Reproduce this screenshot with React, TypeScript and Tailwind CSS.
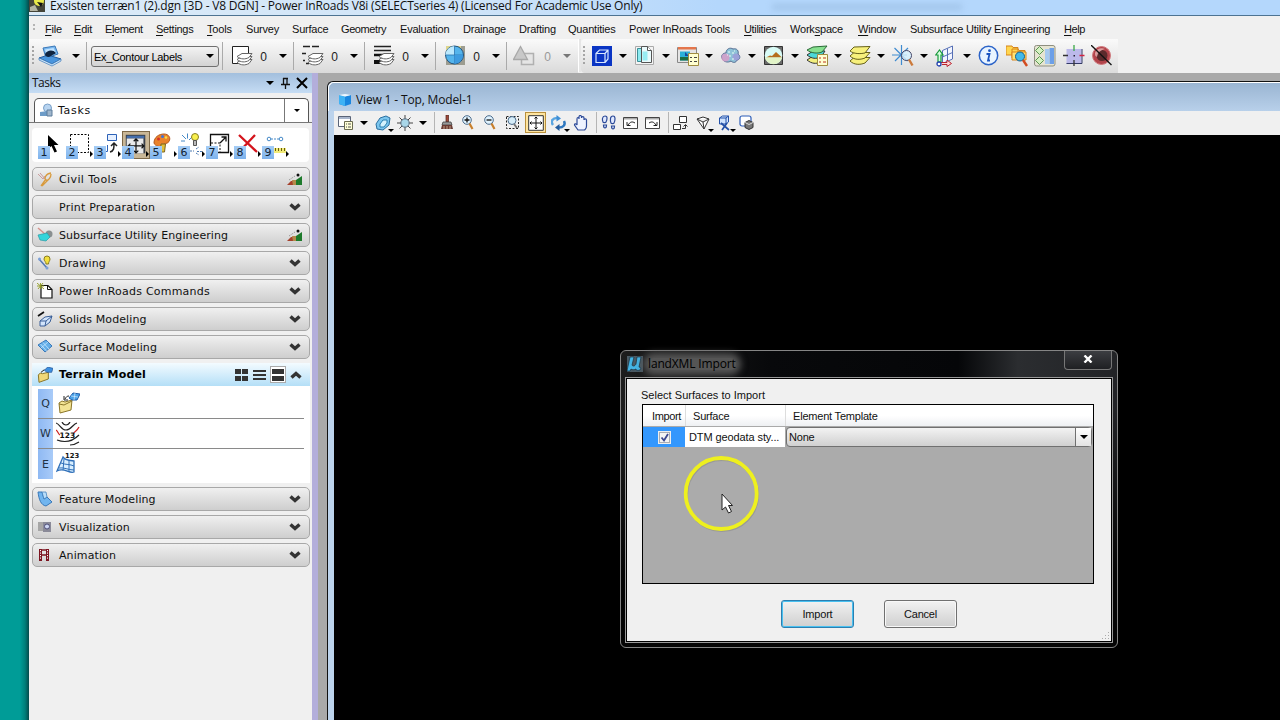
import type { ReactNode } from "react";
import { clsx } from "clsx";

const ui = "font-['Liberation_Sans',Arial,sans-serif]";
const segoe = "font-['Open_Sans','Noto_Sans',sans-serif]";
const verdana = "font-['DejaVu_Sans',Verdana,sans-serif]";

type IconProps = { children: ReactNode; className?: string; box?: number };

const Icon = ({ children, className = "w-[22px] h-[22px]", box = 22 }: IconProps) => (
  <svg viewBox={`0 0 ${box} ${box}`} fill="none" className={clsx("shrink-0", className)}>
    {children}
  </svg>
);

const Arrow = ({ className = "text-black" }: { className?: string }) => (
  <svg viewBox="0 0 8 4" className={clsx("w-2 h-1 shrink-0", className)}>
    <path d="M0 0h8L4 4z" fill="currentColor" />
  </svg>
);

const CornerArrow = () => (
  <svg viewBox="0 0 6 3" className="absolute w-1.5 h-[3px] -right-[3px] -bottom-px">
    <path d="M0 0h6L3 3z" fill="#000" />
  </svg>
);

const Grip = () => (
  <div className="w-0.5 h-5 shrink-0 bg-[repeating-linear-gradient(to_bottom,#a5a5a5_0_2px,transparent_2px_4px)]" />
);

/* ---------- menu bar ---------- */

const menus = [
  { label: "File", key: 0, cls: "w-[29px]" },
  { label: "Edit", key: 0, cls: "w-[31px]" },
  { label: "Element", key: 1, cls: "w-[51px] tracking-[-0.4px]" },
  { label: "Settings", key: 0, cls: "w-[51px] tracking-[-0.3px]" },
  { label: "Tools", key: 0, cls: "w-[39px]" },
  { label: "Survey", key: -1, cls: "w-[46px]" },
  { label: "Surface", key: -1, cls: "w-[49px]" },
  { label: "Geometry", key: -1, cls: "w-[59px] tracking-[-0.4px]" },
  { label: "Evaluation", key: -1, cls: "w-[63px]" },
  { label: "Drainage", key: -1, cls: "w-[56px]" },
  { label: "Drafting", key: -1, cls: "w-[49px]" },
  { label: "Quantities", key: -1, cls: "w-[61px]" },
  { label: "Power InRoads Tools", key: -1, cls: "w-[115px] tracking-[-0.14px]" },
  { label: "Utilities", key: 0, cls: "w-[46px] tracking-[-0.35px]" },
  { label: "Workspace", key: 4, cls: "w-[68px]" },
  { label: "Window", key: 0, cls: "w-[52px]" },
  { label: "Subsurface Utility Engineering", key: -1, cls: "w-[154px] tracking-[-0.24px]" },
  { label: "Help", key: 0, cls: "w-[30px] tracking-[-0.4px]" },
];

const MenuBar = () => (
  <div className={clsx(ui, "flex items-center h-[23px] pl-1 bg-[#f0f0f0] text-[11px] tracking-[-0.2px] text-[#111]")}>
    <div className="w-3 shrink-0">
      <div className="w-0.5 h-2 bg-[repeating-linear-gradient(to_bottom,#b5b5b5_0_2px,transparent_2px_4px)]" />
    </div>
    {menus.map(({ label, key, cls }) => (
      <div key={label} className={clsx("shrink-0 whitespace-nowrap pt-1", cls)}>
        {key < 0 ? label : (
          <>
            {label.slice(0, key)}
            <span className="underline underline-offset-2">{label[key]}</span>
            {label.slice(key + 1)}
          </>
        )}
      </div>
    ))}
  </div>
);

/* ---------- main toolbar ---------- */

const Stack = () => (
  <g fill="#fff" stroke="#666">
    <path d="M6 17.500l5-3h10l-3 4c-4 2-8 2-12-1z" />
    <path d="M6 14.500l5-3h10l-3 4c-4 2-8 2-12-1z" />
    <path d="M6 11.500l5-3h10l-3 4c-4 2-8 2-12-1z" />
  </g>
);

const attributes = [
  {
    name: "level",
    icon: <><path d="M1.500 1.500h16v17h-16z" fill="#fff" stroke="#222" /><Stack /></>,
  },
  {
    name: "style",
    icon: <><path d="M1 1.500h7M10 1.500h7M0 8.500h4M1 15.500h2M4 18.500h3" stroke="#222" strokeWidth="1.300" /><Stack /></>,
  },
  {
    name: "weight",
    icon: <><path d="M1 1.500h17M1 5.500h17" stroke="#222" strokeWidth="1.300" /><path d="M1 10h10" stroke="#111" strokeWidth="2.500" /><path d="M1 17h8" stroke="#111" strokeWidth="4" /><Stack /></>,
  },
  {
    name: "color",
    icon: (
      <>
        <path d="M2 1h19v19H2z" fill="#9c9c90" />
        <path d="M2 1h15v14H2z" fill="#ddd58e" />
        <circle cx="10.500" cy="10" r="9" fill="#54b4ec" stroke="#24527c" />
        <path d="M10.500 1a9 9 0 0 0-9 9h9z" fill="#bce8fc" />
        <path d="M2 10h17M10.500 1v18" stroke="#2a74b0" strokeWidth=".8" />
        <path d="M10.500 10h8.500a9 9 0 0 1-8.500 9z" fill="#3d9be0" />
      </>
    ),
  },
];

const viewTools = [
  {
    name: "models",
    icon: <><path d="M1 1h20v20H1z" fill="#0a35c4" /><path d="M5 8.500h9v9H5zM5 8.500l3.500-3.500H17v9l-3 3.500M14 8.500l3-3.500" stroke="#d9e8ff" strokeWidth="1.200" /></>,
  },
  {
    name: "references",
    icon: <><path d="M1.500 1.500h18v18h-18z" fill="#f4f4f4" stroke="#aaa" /><path d="M3.500 3.500h7v13h-7z" fill="#8ceaf0" stroke="#3b8f97" /><path d="M7.500 1.500h6l4 4v12h-10z" fill="#eafafc" stroke="#555" /><path d="M8.500 6.500h5v9h-5z" fill="#98edf3" /><path d="M13.500 1.500v4h4" fill="#fff" stroke="#555" /></>,
  },
  {
    name: "raster",
    icon: <><path d="M.5 2.500h19v15H.5z" fill="#e4e4e4" stroke="#888" /><path d="M1 2h18v2.500H1z" fill="#e4764c" /><path d="M3 6.500h10v9H3z" fill="#2ab0d8" /><path d="M3 12h10v3.500H3z" fill="#1c6d43" /><path d="M8 7l4 4H8z" fill="#1647a0" /><path d="M11.500 8.500h10v12h-10z" fill="#ffffd0" stroke="#a08c40" /><path d="M13 12.500h2M17 12.500h3M13 16.500h2M17 16.500h3" stroke="#444" strokeWidth="1.200" /></>,
  },
  {
    name: "cloud",
    icon: <><path d="M2 13c-1-3 1-5 4-5 0-4 4-6 7-4 4-1 6 2 5 5 3 2 2 6-1 6-1 3-4 3-6 1-3 2-8 1-9-3z" fill="#8fc3d8" stroke="#526a90" /><circle cx="5.500" cy="12.500" r="4" fill="#dc9bc8" opacity=".8" /><circle cx="16" cy="12" r="3.500" fill="#9f94d8" opacity=".7" /><path d="M8 7h2M12 8h2M9 11h2M14 6h1M12 14h2M7 10h1" stroke="#e8fff5" /></>,
  },
  {
    name: "terrain",
    icon: <><path d="M1.500 1.500h18v18h-18z" fill="#6a6a6a" stroke="#333" /><circle cx="10.500" cy="10.500" r="8.800" fill="#d8fbf6" /><path d="M3 12.500l4-2 2 .500 4-4 6 5.500z" fill="#b56e1e" /><path d="M2 12.500h17c-1 4-4 6.500-8.500 6.500S3 16.500 2 12.500z" fill="#e2f4c8" /></>,
  },
  {
    name: "levels",
    icon: <><path d="M1 15l6-4h12l-4 6c-5 2-9 2-14-2z" fill="#f2ef7d" stroke="#333" /><path d="M1 10l6-4h12l-4 6c-5 2-9 2-14-2z" fill="#4bd8d8" stroke="#333" /><path d="M1 5l6-3 14-1-5 6C11 9 5 8 1 5z" fill="#86e08f" stroke="#2b6a37" /><path d="M11.500 9.500h10v11h-10z" fill="#ffffd0" stroke="#a08c40" /><path d="M13 13h2M17 13h3M13 17h2M17 17h3" stroke="#b32" strokeWidth="1.200" /></>,
  },
  {
    name: "level-display",
    icon: <g fill="#f7f07c" stroke="#66601a"><path d="M1 16l4-3.500h16l-5 5.500c-5 2-11 2-15-2z" /><path d="M1 11l4-3.500h16l-5 5.500c-5 2-11 2-15-2z" /><path d="M1 6l4-4 16-.500-5 6.500C11 9 5 9 1 6z" /></g>,
  },
  {
    name: "snap",
    icon: <><path d="M9.500 0v20M0 10h15M2.500 3l13 13M16 3L3 16" stroke="#3f8bd0" strokeWidth="1.200" /><circle cx="14.500" cy="10.500" r="5" fill="#d3f0ff" fillOpacity=".8" stroke="#446" /><path d="M17 14.500l3.500 6" stroke="#cc7a3b" strokeWidth="2.400" /></>,
  },
  {
    name: "accudraw",
    icon: <><path d="M7.500 5.500l10-4.500v13l-10 4.500zM7.500 12l10-4.500M12.500 3.500v13" fill="#f3f5ff" stroke="#556fb5" /><path d="M3 17v-7H.7L4.500 5 8 10H6v7z" fill="#d9ffe0" stroke="#16993a" strokeWidth="1.200" /><path d="M6 17.500h6v-2.500l4.500 3.500-4.500 3v-2H7" fill="#ffd5d5" stroke="#b8222c" /><circle cx="4" cy="19" r="2" fill="#fff" stroke="#2340b0" strokeWidth="1.300" /></>,
  },
];

const endTools = [
  {
    name: "info",
    icon: (
      <>
        <circle cx="10.500" cy="10.500" r="9.200" fill="#e9f4ff" stroke="#2b63c8" strokeWidth="1.500" />
        <circle cx="11.500" cy="5.700" r="1.400" fill="#1b54c0" />
        <path d="M8.500 9h3L10 15.500h2" stroke="#1b54c0" strokeWidth="1.800" />
      </>
    ),
  },
  {
    name: "explore",
    icon: <><path d="M0 1h6l1 1.500h5V10H0zM6 4h6l1 1.500h6V13H6z" fill="#ffd64f" stroke="#d5831c" /><path d="M6 7h14v8H6z" fill="#ffe273" stroke="#d5831c" /><circle cx="14" cy="11.500" r="4.500" fill="#42b9e8" stroke="#15608c" /><path d="M17 15l4 6" stroke="#d24b1f" strokeWidth="2.400" /></>,
  },
  {
    name: "toggle",
    icon: <><rect x=".5" y=".5" width="20.500" height="20.500" rx="2" fill="#e6e4d2" stroke="#8f8f80" /><path d="M11 4h4v15h-4z" fill="#a6c9f0" /><path d="M15.500 3h4.500v16h-4.500z" fill="#6c9fe8" /><path d="M5.500 1.500l4 4-4 4-4-4zM5.500 11.500l4 4-4 4-4-4z" fill="#d5f2c2" stroke="#5b9450" /></>,
  },
  {
    name: "center",
    icon: <><path d="M3.500 4h15v15h-15z" fill="#bcb9ea" /><path d="M3.500 18.500h15.500V4" stroke="#333a66" /><path d="M11 0v6" stroke="#39a845" strokeWidth="1.300" /><path d="M16.500 10.500h5" stroke="#d22440" strokeWidth="1.500" /><path d="M0 10.500h5M11 15v6" stroke="#333" strokeWidth="1.300" /><path d="M10.500 10H12v1.500h-1.500z" fill="#223" /></>,
  },
  {
    name: "stop",
    icon: <><circle cx="10.500" cy="10.500" r="9" fill="#b2444b" stroke="#d0787c" /><circle cx="11" cy="10.500" r="5.500" fill="#5b2a2c" /><path d="M4 8c1-4 6-6 10-4-4 1-7 3-8 8-2-1-2-2-2-4z" fill="#ecbcbc" opacity=".75" /><path d="M0 0l20.500 20" stroke="#111" strokeWidth="1.300" /></>,
  },
];

const MainToolbar = () => (
  <div className="flex h-[34px] bg-[#f0f0f0]">
    <div className={clsx(ui, "flex items-center shrink-0 w-[549px] pl-[3px] bg-gradient-to-b from-[#fafafa] to-[#dadada] text-[12px]")}>
      <Grip />
      <Icon className="w-6 h-6 ml-1" box={24}>
        <path d="M5 4l12-2 3 8-12 4z" fill="#79b7ef" stroke="#3a78b8" />
        <path d="M7 5.500l8.500-1.500 2.500 5-9 3z" fill="#bfe2ff" />
        <path d="M1 14l9-3 13 4-9 5z" fill="#4a95dd" stroke="#235c9e" />
        <path d="M7 10c2-4 8-5 11-1-2 2-3 1-5 3s-6 1-6-2z" fill="#0f2440" />
        <path d="M1 14v2l13 6 9-5v-2l-9 5z" fill="#cfe6fb" stroke="#3a78b8" strokeWidth=".7" />
      </Icon>
      <div className="ml-2.5"><Arrow /></div>
      <div className="w-px h-7 ml-1.5 shrink-0 bg-[#aaa]" />
      <div className="flex items-center justify-between w-[128px] h-[21px] ml-1 shrink-0 pl-0.5 pr-1 rounded-[3px] border border-[#707070] bg-gradient-to-b from-[#f3f3f3] to-[#d3d3d3]">
        <span className="pt-0.5 text-[11px] tracking-[-0.33px] text-black">Ex_Contour Labels</span>
        <Arrow />
      </div>
      <div className="w-[3px] shrink-0" />
      {attributes.map(({ name, icon }) => (
        <div key={name} className="flex items-center w-[71px] shrink-0">
          <div className="w-px h-7 bg-[#aaa]" />
          <Icon className="w-[22px] h-[22px] ml-2">{icon}</Icon>
          <span className="w-[21px] pt-0.5 text-center text-[#222]">0</span>
          <div className="ml-[5px]"><Arrow /></div>
        </div>
      ))}
      <div className="w-px h-7 shrink-0 bg-[#aaa]" />
      <Icon className="w-[22px] h-[22px] ml-1.5">
        <path d="M8.500 8.500h12v11h-12z" fill="#e5e5e5" stroke="#b0b0b0" strokeWidth="1.500" />
        <path d="M7.500 1.500l7 13h-14z" fill="#c8c8c8" stroke="#a8a8a8" strokeWidth="1.300" />
      </Icon>
      <span className="w-[25px] pt-0.5 text-center shrink-0 text-[#999]">0</span>
      <div className="ml-[3px]"><Arrow className="text-[#777]" /></div>
    </div>
    <div className="w-[3px] h-[33px] shrink-0 border-l border-white bg-[#e6e6e6]" />
    <div className="flex items-center shrink-0 w-[537px] pl-0.5 rounded-l bg-gradient-to-b from-[#fafafa] to-[#dcdcdc]">
      <Grip />
      <div className="w-[6px] shrink-0" />
      {viewTools.map(({ name, icon }) => (
        <div key={name} className="flex items-center w-[43px] shrink-0">
          <Icon>{icon}</Icon>
          <div className="ml-1.5"><Arrow /></div>
        </div>
      ))}
      {endTools.map(({ name, icon }) => (
        <div key={name} className="w-[28.2px] shrink-0">
          <Icon>{icon}</Icon>
        </div>
      ))}
    </div>
  </div>
);

/* ---------- tasks panel ---------- */

const quickTools = [
  { n: 1, icon: <path d="M10 4v14l3.500-3 3 6.500 2.500-1-3-6.500h4.500z" fill="#000" /> },
  { n: 2, icon: <path d="M4.500 3.500h18v18h-18z" stroke="#000" strokeDasharray="2 1.500" /> },
  { n: 3, icon: <><path d="M13.500 3.500h9v6h-9z" fill="#e6f0ff" stroke="#2d62b8" /><path d="M8 20.500h5.500V14" stroke="#2d62b8" /><path d="M16 21c4-1 4-4 4-8M17 15l3-3 3 3" stroke="#222" strokeWidth="1.500" /></> },
  {
    n: 4,
    active: true,
    icon: <><path d="M3 3h21v20H3z" fill="#3a3f48" /><path d="M4 4h19v3H4z" fill="#446dab" /><path d="M4 7h18v16H4z" fill="#e9e9e9" /><path d="M14 7v16M5 15h18M11.500 10L14 7.500l2.500 2.500M11.500 20l2.500 2.500 2.500-2.500M8 12.500L5.500 15 8 17.500M20 12.500l2.500 2.500-2.500 2.500" stroke="#111" strokeWidth="1.300" /></>,
  },
  { n: 5, icon: <><path d="M4 12c0-6 5-9 10-9 5 0 7 4 5 7.500-2 3-5 1-6 4-2 2-8 1-9-2.500z" fill="#e9832d" stroke="#b4571c" /><circle cx="8.500" cy="8" r="1.500" fill="#d3322a" /><circle cx="12.500" cy="5.500" r="1.500" fill="#4073d8" /><circle cx="16" cy="6.500" r="1.300" fill="#f5e04d" /><path d="M11 13h4.500l-1 8h-4z" fill="#e0c03a" stroke="#7b6420" /></> },
  { n: 6, icon: <><path d="M4 4l4 4M9.500 2.500v5M3 10h4M11 9l3-3" stroke="#468ac8" /><circle cx="17" cy="6" r="3.500" fill="#f8ef4d" stroke="#8a8020" /><path d="M15.500 9.500h3v5h-3z" fill="#bbb" stroke="#555" /><path d="M12 20h4M18 18l3-2M19 20.500h5M18 22l3 2" stroke="#4a78b0" strokeDasharray="2 1" /></> },
  { n: 7, icon: <><path d="M4.500 3.500h18v18h-18z" stroke="#111" strokeWidth="1.300" /><path d="M5 12h9v9" stroke="#111" strokeDasharray="2 1.500" /><path d="M14 12l5.500-5.500M15.500 6h4.500v4.500" stroke="#111" strokeWidth="1.300" /></> },
  { n: 8, icon: <path d="M5 4l18 17M21 4L5 21" stroke="#d4141c" strokeWidth="2.300" /> },
  { n: 9, icon: <><circle cx="7" cy="8" r="1.800" stroke="#468ac8" /><circle cx="19" cy="8" r="1.800" stroke="#468ac8" /><path d="M9 8h8" stroke="#468ac8" strokeDasharray="2 1" /><path d="M10 17h14v5H10z" fill="#f2eb78" /><path d="M13.500 17v3M16.500 17v3M19.500 17v3M22.500 17v3" stroke="#665c10" /></> },
];

const Chevron = ({ up }: { up?: boolean }) => (
  <svg viewBox="0 0 12 8" fill="none" className={clsx("w-3 h-2", up && "rotate-180")}>
    <path d="M1.500 1.500L6 5.500l4.500-4" stroke="#333" strokeWidth="3.400" />
  </svg>
);

const Workflow = () => (
  <svg viewBox="0 0 16 13" className="w-4 h-[13px]">
    <path d="M0 12l4-4h3v4z" fill="#a5412c" />
    <path d="M5 7h4v5H6z" fill="#b58a4b" />
    <path d="M9 12V7l6-4v9z" fill="#1d7a2b" />
    <path d="M2 7l6-4" stroke="#888" strokeDasharray="1 1" />
    <circle cx="11" cy="2" r="1.500" fill="#111" />
  </svg>
);

type Task = { label: string; flow?: boolean; cls?: string; icon: ReactNode };

const topTasks: Task[] = [
  {
    label: "Civil Tools", flow: true, cls: "tracking-[0.38px]",
    icon: <><path d="M1 3l5 5 2-3M3 2l6 7" stroke="#c99a9a" /><path d="M14 2C8 3 7 8 9 9s5-2 5-6M9 8l-5 7M12 8l-7 7" stroke="#d89a3c" strokeWidth="1.300" /></>,
  },
  { label: "Print Preparation", cls: "tracking-[0.23px]", icon: null },
  {
    label: "Subsurface Utility Engineering", flow: true, cls: "tracking-[0.07px]",
    icon: <><path d="M1 1l7 6" stroke="#d6928c" strokeWidth="1.500" /><circle cx="12" cy="7" r="3.500" fill="#8a8f90" /><path d="M1 8l9-2 3 4-4 4-6-1z" fill="#35d4da" stroke="#2b9ba5" strokeWidth=".7" /></>,
  },
  {
    label: "Drawing",
    icon: <><path d="M2 4l8 9" stroke="#5278b4" strokeWidth="1.500" /><circle cx="2.500" cy="4" r="1.500" fill="#7ba0d8" /><circle cx="10" cy="13" r="1.500" fill="#7ba0d8" /><path d="M7 4a3 3 0 0 1 6 0c0 2-1.500 2.500-1.500 5h-2.500C9 6.500 7 6 7 4z" fill="#f2df3c" stroke="#8a7d20" /></>,
  },
  {
    label: "Power InRoads Commands", cls: "tracking-[0.22px]",
    icon: <><path d="M4 2.500h7l4 4v8.500H4z" fill="#fff" stroke="#111" strokeWidth="1.200" /><path d="M10.500 2.500v4H15" stroke="#111" /><path d="M0 0l7 6M6 0L1 6M0 3h7M3.500 0v6" stroke="#8f9a20" strokeWidth=".9" /></>,
  },
  {
    label: "Solids Modeling", cls: "tracking-[0.1px]",
    icon: <><path d="M3 10l5-4 7-1-2 6-5 4H3z" fill="#d2e4fb" stroke="#3a5f98" /><path d="M3 10h6l6-5M9 10l-1 5" stroke="#3a5f98" /><path d="M1 5l6-4" stroke="#111" strokeWidth="1.700" /></>,
  },
  {
    label: "Surface Modeling",
    icon: <><path d="M1 6l8-5 6 6-7 6z" fill="#63aee8" stroke="#3a78b8" /><path d="M3.500 5l6 7M6 3.500l6 6.500M4 9l7-6" stroke="#c5e6ff" strokeWidth=".8" /></>,
  },
];

const bottomTasks: Task[] = [
  {
    label: "Feature Modeling", cls: "tracking-[0.1px]",
    icon: <><path d="M1 1h4l2 7 3-2 5 5-6 4C4 14 2 9 1 1z" fill="#71b5ef" stroke="#3a78b8" /><path d="M5 1h4l1 5-3 2z" fill="#b9defa" stroke="#3a78b8" strokeWidth=".7" /></>,
  },
  {
    label: "Visualization", cls: "tracking-[0.1px]",
    icon: <><path d="M1 3h5v9H1z" fill="#a6a6a6" /><path d="M6 3h8v10H6z" fill="#8a8a98" /><circle cx="10" cy="7.500" r="2.500" fill="#cdd6f2" stroke="#50507a" /></>,
  },
  {
    label: "Animation", cls: "tracking-[0.1px]",
    icon: <><path d="M3.500 2v12M10.500 2v12" stroke="#7c1420" strokeWidth="3" /><path d="M3 3h8M3 8h8" stroke="#7c1420" strokeWidth="1.400" /><path d="M3.500 3v10M10.500 3v10" stroke="#fff" strokeDasharray="1.200 1.300" /></>,
  },
];

const TaskRow = ({ label, flow, icon, cls = "tracking-[0.17px]" }: Task) => (
  <div className="flex items-center h-6 px-1 rounded-[5px] border border-[#a8a8a8] bg-gradient-to-b from-[#f0f0f0] to-[#cecece]">
    <Icon className="w-4 h-4" box={16}>{icon}</Icon>
    <span className={clsx("flex-1 pl-1.5 pt-[3px] whitespace-nowrap", cls)}>{label}</span>
    <div className="flex justify-center w-[18px] mr-px">{flow ? <Workflow /> : <Chevron />}</div>
  </div>
);

const terrainTools = [
  {
    k: "Q",
    icon: <><path d="M3 11l3-2 3 1 7-2-1 10-11 3z" fill="#f3e394" stroke="#8b7628" /><path d="M3 12l5 1 8-4" stroke="#8b7628" /><path d="M13 6l4-5 7 1-3 6-5 0z" fill="#4aa2e8" stroke="#1f5da8" /><path d="M15 4l7 1M19 1l-1 7" stroke="#d3ecff" strokeWidth=".7" /><path d="M13 4c-2 0-3 1-4 3M8 4v4h4" stroke="#222" /></>,
  },
  {
    k: "W",
    icon: (
      <>
        <path d="M0 1c4 1 5 7 10 7s7-6 11-7M6 0c2 4 6 4 8 0M1 18c8 3 16 1 22-5M14 23c4 0 6-1 9-3" stroke="#222" strokeWidth="1.200" />
        <path d="M0 8c2 1 2 4 4 5M17 12c2-3 4-3 6-7" stroke="#c22" strokeWidth="1.200" />
        <text x="3.500" y="16" fontSize="7.500" fontWeight="bold" fill="#111" fontFamily="DejaVu Sans">123</text>
      </>
    ),
  },
  {
    k: "E",
    icon: (
      <>
        <path d="M1 19L7 5c3 4 6 3 11 4v11c-5 2-10-5-17-1z" fill="#d9efff" stroke="#2f6fb8" strokeWidth="1.300" />
        <path d="M5 11c5 2 9 1 13 3M3 16c5-1 9 2 15 2M13 8v12M8 7l-1 11" stroke="#2f6fb8" />
        <text x="9" y="6" fontSize="6.800" fontWeight="bold" fill="#111" fontFamily="DejaVu Sans">123</text>
      </>
    ),
  },
];

const TasksPanel = () => (
  <div className={clsx(verdana, "flex flex-col w-[283px] shrink-0 bg-[#f0f0f0] text-[11px] text-[#111]")}>
    <div className={clsx(segoe, "flex items-center h-5 pl-[3px] pr-1 bg-gradient-to-b from-[#a3bfdd] to-[#c5dcf4] text-[12px] tracking-[-0.5px]")}>
      <span className="flex-1">Tasks</span>
      <Arrow />
      <svg viewBox="0 0 9 12" fill="none" className="w-[9px] h-3 ml-[7px]">
        <path d="M2.500 1v6M6 1v6M2 1.500h5M0 7.500h9M4.500 8v4" stroke="#111" strokeWidth="1.300" />
      </svg>
      <svg viewBox="0 0 12 12" fill="none" className="w-3 h-3 ml-1.5">
        <path d="M1 1l10 10M11 1L1 11" stroke="#000" strokeWidth="2" />
      </svg>
    </div>
    <div className="h-[30px] pt-[5px] pl-[5px] pr-[3px] border-b border-[#777]">
      <div className="flex items-center h-6 rounded-t-[5px] border border-b-0 border-[#555] bg-white">
        <Icon className="w-[15px] h-[15px] ml-1" box={15}>
          <circle cx="8.500" cy="5" r="4" fill="#b8d4f0" stroke="#7aa0c8" />
          <path d="M1 9l8-1v5H1z" fill="#6d9cc8" />
          <path d="M8 7h5v6H8z" fill="#9fb6cc" stroke="#5d7c9c" />
        </Icon>
        <span className="flex-1 pl-1 pt-0.5 tracking-[0.7px]">Tasks</span>
        <div className="flex items-center justify-center w-6 h-full border-l border-[#777]">
          <svg viewBox="0 0 6 3" className="w-1.5 h-[3px]"><path d="M0 0h6L3 3z" fill="#000" /></svg>
        </div>
      </div>
    </div>
    <div className="flex h-[34px] mt-[5px] mb-[5px] ml-[3px] mr-[3px] pl-1.5 pt-[3px] rounded-sm bg-white">
      {quickTools.map(({ n, icon, active }) => (
        <div key={n} className="relative w-7 h-7 shrink-0">
          <div className={clsx("w-7 h-7", active && "bg-[#c9b797] border border-[#7d6848]")}>
            <Icon className={active ? "w-[26px] h-[26px]" : "w-7 h-7"} box={28}>{icon}</Icon>
          </div>
          <div className="absolute left-0 bottom-0 w-3 h-[13px] flex items-center justify-center bg-gradient-to-b from-[#a5cdf6] to-[#7db2ec]">
            <span className="text-[11px] leading-none text-[#123]">{n}</span>
          </div>
          {n > 1 && (
            <svg viewBox="0 0 3 6" className="absolute w-[3px] h-1.5 right-px bottom-0.5"><path d="M0 0v6l3-3z" fill="#000" /></svg>
          )}
        </div>
      ))}
    </div>
    <div className="flex flex-col gap-1 ml-[3px] mr-0.5">
      {topTasks.map((t) => <TaskRow key={t.label} {...t} />)}
      <div className="h-[120px]">
        <div className="flex items-center h-[23px] px-[5px] bg-gradient-to-b from-[#f3fbff] to-[#b4dff7]">
          <Icon className="w-4 h-4" box={24}>
            <path d="M2 12l3-3 3 1 9-2v10l-14 5z" fill="#f0d878" stroke="#8b7628" strokeWidth="1.500" />
            <path d="M11 5l5-5 8 2-2 6-7 0z" fill="#3d8fe0" stroke="#1f4f90" />
            <path d="M11 4L6 8" stroke="#222" strokeWidth="1.500" />
          </Icon>
          <span className="flex-1 pl-1.5 pt-0.5 font-bold tracking-[0.17px] text-black">Terrain Model</span>
          <svg viewBox="0 0 13 12" className="w-[13px] h-3"><path d="M0 0h6v5H0zM7 0h6v5H7zM0 7h6v5H0zM7 7h6v5H7z" fill="#333" /></svg>
          <svg viewBox="0 0 13 12" className="w-[13px] h-3 ml-[5px]"><path d="M0 1h13v2H0zM0 5h13v2H0zM0 9h13v2H0z" fill="#333" /></svg>
          <div className="flex items-center justify-center w-4 h-[17px] ml-1 mr-px border border-[#aaa] bg-white">
            <svg viewBox="0 0 12 12" className="w-3 h-3"><path d="M0 0h12v5H0zM0 7h12v5H0z" fill="#333" /></svg>
          </div>
          <div className="flex justify-center w-[18px]"><Chevron up /></div>
        </div>
        <div className="h-[97px] pl-1.5 pr-1.5 pt-[3px] bg-white">
          {terrainTools.map(({ k, icon }, i) => (
            <div key={k} className={clsx("flex items-center h-[30px]", i < 2 && "border-b border-[#8a8a8a]")}>
              <div className="flex items-center justify-center w-[15px] h-full pt-0.5 bg-gradient-to-r from-[#8fb9f3] to-[#a9cbf8] text-[#234]">{k}</div>
              <Icon className="w-6 h-6 ml-[3px]" box={24}>{icon}</Icon>
            </div>
          ))}
        </div>
      </div>
      {bottomTasks.map((t) => <TaskRow key={t.label} {...t} />)}
    </div>
  </div>
);

/* ---------- view window ---------- */

const viewIcons: { name: string; cls: string; box?: string; corner?: boolean; arrow?: boolean; sep?: boolean; icon: ReactNode }[] = [
  { name: "attributes", cls: "w-[37px]", arrow: true, icon: <><path d="M.5 1.500h12v10H.5z" fill="#fff" stroke="#5a6478" /><path d="M1 2h11v2H1z" fill="#a9b6cc" /><path d="M6.500 6.500h8v8h-8z" fill="#ffffd8" stroke="#6b6b50" /><path d="M8 9h1M10 9h3M8 12h1M10 12h3" stroke="#555" /></> },
  { name: "style", cls: "w-[22px]", corner: true, icon: <><path d="M1 9l4-6 6-2 4 2-1 7-6 5-6-1z" fill="#7cc6ee" stroke="#2a6fa0" /><path d="M5 9l3-4h4v3l-3 4H5z" fill="#d5f1fc" stroke="#2a7fb0" /></> },
  { name: "brightness", cls: "w-[42px]", arrow: true, sep: true, icon: <><path d="M8 0v16M0 8h16M2.500 2.500l11 11M13.500 2.500l-11 11" stroke="#444" /><circle cx="8" cy="8" r="4.200" fill="#a9d6e8" stroke="#567" /></> },
  { name: "update", cls: "w-[22px]", icon: <><path d="M7 0h2.500v7H7z" fill="#a04a3a" stroke="#50231c" strokeWidth=".7" /><path d="M4 7h8l1 3H3z" fill="#999" stroke="#444" strokeWidth=".8" /><path d="M3 10h10l1 4H2z" fill="#6a3b33" /><path d="M5 11v3M8 11v3M11 11v3" stroke="#d9b9a0" strokeWidth=".8" /></> },
  { name: "zoom-in", cls: "w-[22px]", icon: <><circle cx="6" cy="5" r="4.300" fill="#e0f3ff" stroke="#4a6a8a" /><path d="M3.500 5h5M6 2.500v5" stroke="#111" strokeWidth="1.300" /><path d="M8.500 8.500l3 5.500" stroke="#c87f2c" strokeWidth="2.200" /></> },
  { name: "zoom-out", cls: "w-[22px]", icon: <><circle cx="6" cy="5" r="4.300" fill="#e0f3ff" stroke="#4a6a8a" /><path d="M3.500 5h5" stroke="#111" strokeWidth="1.300" /><path d="M8.500 8.500l3 5.500" stroke="#c87f2c" strokeWidth="2.200" /></> },
  { name: "window-area", cls: "w-[23px]", icon: <><path d="M1.500 1.500h12v12h-12z" stroke="#222" strokeDasharray="2 1.500" /><circle cx="7" cy="5.500" r="4" fill="#d5ecf8" stroke="#4a6a8a" /><path d="M9 9l3 4" stroke="#777" strokeWidth="2" /></> },
  { name: "fit", cls: "w-[23px]", box: "bg-[#ffe5a0] border-[#b9903c]", icon: <><path d="M.7.700h14.600v14.600H.7z" fill="#fff" stroke="#333" /><path d="M8 2v12M2 8h12M6.500 3.500L8 2l1.500 1.500M6.500 12.500L8 14l1.500-1.500M3.500 6.500L2 8l1.500 1.500M12.500 6.500L14 8l-1.500 1.500" stroke="#111" /></> },
  { name: "rotate", cls: "w-[22px]", corner: true, icon: <><path d="M2 10c-3-4 0-7 4-7" stroke="#5aa5e0" strokeWidth="2.500" /><path d="M5.500 0v6.500L10 3.500z" fill="#3f8fd6" /><path d="M13 6c2 4-1 6.500-5 6.500" stroke="#2f78c0" strokeWidth="2.500" /><path d="M8.500 9v7L4 12.500z" fill="#235c9e" /></> },
  { name: "pan", cls: "w-[28px]", sep: true, icon: <path d="M5 15L1.500 10c0-2 2-1 2.500 0V4c0-2 2-2 2 0V2c0-2 2.500-2 2.500 0v1c0-2 2.500-1.500 2.500 0v2c0-1.500 2.500-1.500 2.500 0v6c0 3-1 3-2 4z" fill="#eef3ff" stroke="#2c4a98" strokeWidth="1.200" /> },
  { name: "walk", cls: "w-[22px]", icon: <><path d="M4 1c-3 0-3 4-2 6 0 1 3 1 3 0 1-2 2-6-1-6zM2.500 10c0 4 3 4 3 0zM12 1c-3 0-3 4-2 7 0 1 3 1 3 0 1-2 2-7-1-7zM10.500 11c0 4 3 4 3 0z" fill="#dfe8ff" stroke="#2c4a98" strokeWidth="1.200" /></> },
  { name: "previous", cls: "w-[22px]", icon: <><path d="M.5 2.500h14v11H.5z" fill="#fff" stroke="#444" /><path d="M1 3h13v1.500H1z" fill="#aaa" /><path d="M12 8c-3-2-5-1-7 2M4 7v3.500h3.500" stroke="#222" /></> },
  { name: "next", cls: "w-[28px]", sep: true, icon: <><path d="M.5 2.500h14v11H.5z" fill="#fff" stroke="#444" /><path d="M1 3h13v1.500H1z" fill="#aaa" /><path d="M4 8c3-2 5-1 7 2M12 7v3.500H8.500" stroke="#222" /></> },
  { name: "copy", cls: "w-[22px]", icon: <><path d="M6.500 1.500h7v6h-7zM.5 9.500h7v5h-7z" fill="#fff" stroke="#333" /><path d="M9 13.500h3.500V10M10.500 11.500l2-2 2 2" stroke="#333" /></> },
  { name: "perspective", cls: "w-[22px]", corner: true, icon: <path d="M2 4l6-2 6 2-5 10zM2 4l6 3 6-3M8 7l1 7" fill="#fff" stroke="#333" /> },
  { name: "clip-volume", cls: "w-[22px]", corner: true, icon: <><path d="M2.500 3l3-2h6v6L9 9H2.500zM2.500 3H9v6M9 3l2.500-2" fill="#cfe3ff" stroke="#2350a8" /><path d="M4 8l8 7M10 8l-5 7" stroke="#2350a8" strokeWidth="1.700" /></> },
  { name: "clip-mask", cls: "w-[22px]", icon: <><rect x="1" y="1" width="11" height="10" rx="2" fill="#fff" stroke="#2c5db8" strokeWidth="1.200" /><path d="M6 7.500l4-2 4 2v5l-4 2-4-2z" fill="#777" stroke="#333" /><path d="M6 7.500l4 2 4-2" stroke="#ddd" /></> },
];

const ViewWindow = () => (
  <div className="flex-1 flex flex-col min-w-0 pl-[9px] bg-[#a9a9a9]">
    <div className="h-2 shrink-0" />
    <div className="flex-1 flex flex-col rounded-tl-md border-l border-t border-[#111] bg-[#bcd3ec] pl-1.5">
      <div className={clsx(segoe, "flex items-center h-[29px] shrink-0 -ml-1.5 pl-2.5 pt-[5px] rounded-tl-md border-t border-l border-white bg-gradient-to-b from-[#9ab5d2] to-[#b8d0ea] text-[12px] tracking-[-0.15px] text-[#111]")}>
        <Icon className="w-3 h-3" box={12}>
          <path d="M0 1l6 1.500L12 1v9l-6 2-6-2z" fill="#1a86e0" />
          <path d="M0 1l6 1.500v9.500l-6-2z" fill="#3fb2f4" />
          <path d="M0 1l6-1 6 1-6 1.500z" fill="#eef8ff" />
        </Icon>
        <span className="pl-[5px]">View 1 - Top, Model-1</span>
      </div>
      <div className="flex items-center h-6 shrink-0 pl-1 pb-px bg-[#f0f0f0]">
        {viewIcons.map(({ name, cls, box, corner, arrow, sep, icon }) => (
          <div key={name} className={clsx("flex items-center shrink-0", cls)}>
            <div className={clsx("relative flex items-center justify-center shrink-0", box ? clsx("w-[21px] h-[21px] -ml-[3px] border", box) : "w-4 h-4")}>
              <Icon className="w-4 h-4" box={16}>{icon}</Icon>
              {corner && <CornerArrow />}
            </div>
            {arrow && <div className="ml-1.5"><Arrow /></div>}
            {sep && <div className="w-px h-[21px] ml-auto mr-1 bg-[#b5b5b5]" />}
          </div>
        ))}
      </div>
      <div className="flex-1 bg-black" />
    </div>
  </div>
);

/* ---------- import dialog ---------- */

const ImportDialog = () => (
  <div className={clsx(ui, "absolute left-[620px] top-[350px] w-[498px] h-[298px] flex flex-col px-1 pb-1 rounded-md border border-[#858585] bg-[linear-gradient(to_bottom,transparent_20%,#050505_75%),linear-gradient(to_right,#1d1d1d_0%,#08090b_30%,#050608_68%,#2b2d30_80%,#222326_100%)] text-[11px] tracking-[-0.2px] text-[#111]")}>
    <div className="flex items-start h-[26px] shrink-0">
      <Icon className="w-4 h-4 mt-[5px] ml-0.5" box={16}>
        <path d="M0 0h16v16H0z" fill="#4a5a64" />
        <path d="M3 1h4L5 9c1 2 3 1 4-1l1-7h4l-2 10 2 1-1 2c-3 1-4 0-4-1-2 1-4 1-5 0l-1 2H0z" fill="#45b5e6" stroke="#10222e" strokeWidth=".6" />
      </Icon>
      <div className={clsx(segoe, "h-3 mt-[7px] ml-[5px] text-[12px] leading-3 tracking-[-0.15px] rounded-full bg-[#555] shadow-[0_0_7px_5px_#555] text-black")}>landXML Import</div>
      <div className="flex items-center justify-center w-12 h-[19px] ml-auto mr-px pb-0.5 rounded-b border border-t-0 border-[#777] bg-gradient-to-b from-[#3c3e42] to-[#1f2023]">
        <svg viewBox="0 0 10 8" fill="none" className="w-2.5 h-2"><path d="M1.500.500l7 7M8.500.500l-7 7" stroke="#fff" strokeWidth="2.400" /></svg>
      </div>
    </div>
    <div className="flex-1 border border-[#999] bg-black p-px">
      <div className="relative w-full h-full bg-[#f0f0f0] pt-2 pl-[15px]">
        <div className="h-[17px] leading-4 -ml-px tracking-[0.02px]">Select Surfaces to Import</div>
        <div className="w-[452px] h-[180px] border border-black bg-[#ababab]">
          <div className="flex h-[22px] border-b border-[#aaa] bg-gradient-to-b from-white from-50% to-[#eef0f3] leading-[23px]">
            <div className="w-[43px] pl-[9px] border-r border-[#ddd] tracking-[-0.35px]">Import</div>
            <div className="w-[100px] pl-[7px] border-r border-[#ddd]">Surface</div>
            <div className="pl-[7px] tracking-[-0.2px]">Element Template</div>
          </div>
          <div className="flex h-5 leading-5">
            <div className="flex items-center justify-center w-[42px] bg-[#3397fd]">
              <div className="w-[13px] h-[13px] border border-[#eee] bg-[#f4f4f4] shadow-[inset_0_0_0_1px_#a9adb5]">
                <svg viewBox="0 0 11 11" fill="none" className="w-[11px] h-[11px]"><path d="M2.500 5.500l2.500 3L9 2" stroke="#3c4890" strokeWidth="1.800" /></svg>
              </div>
            </div>
            <div className="w-[101px] pl-1 bg-white border-r border-[#aaa] whitespace-nowrap tracking-[-0.1px]">DTM geodata sty...</div>
            <div className="flex flex-1 mr-px rounded-sm border border-[#707070] bg-gradient-to-b from-[#f3f3f3] to-[#d0d0d0]">
              <span className="flex-1 pl-0.5 leading-[18px]">None</span>
              <div className="flex items-center justify-center w-4 border-l border-[#707070] bg-gradient-to-b from-white to-[#e3e3e3]"><Arrow /></div>
            </div>
          </div>
        </div>
        <div className="flex gap-[30px] pt-4 pl-[139px]">
          <div className="flex items-center justify-center w-[73px] h-7 rounded-[3px] border border-[#2c7fb0] bg-gradient-to-b from-[#f2f2f2] to-[#cfcfcf] shadow-[inset_0_0_0_1px_#48c0f0]">Import</div>
          <div className="flex items-center justify-center w-[73px] h-7 rounded-[3px] border border-[#707070] bg-gradient-to-b from-[#f2f2f2] to-[#cfcfcf] shadow-[inset_0_0_0_1px_#f8f8f8]">Cancel</div>
        </div>
        <svg viewBox="0 0 8 8" className="absolute w-2 h-2 right-px bottom-px">
          <path d="M6 0h1v1H6zM6 3h1v1H6zM6 6h1v1H6zM3 3h1v1H3zM3 6h1v1H3zM0 6h1v1H0z" fill="#aaa" />
        </svg>
      </div>
    </div>
  </div>
);

const Pointer = () => (
  <svg viewBox="0 0 80 80" fill="none" className="absolute left-[681px] top-[453px] w-20 h-20">
    <circle cx="41" cy="42" r="35.500" stroke="#777" strokeWidth="3" opacity=".35" />
    <circle cx="40.200" cy="40.500" r="35.500" stroke="#eef01e" strokeWidth="3.800" />
    <path d="M41 41v16l3.500-3 3 6 3-1.500-3-6h4z" fill="#fff" stroke="#222" />
  </svg>
);

export default function App() {
  return (
    <div className="relative flex w-[1280px] h-[720px] overflow-hidden bg-[#009c97]">
      <div className="w-[29px] shrink-0 bg-[linear-gradient(to_right,#009c97_0_20px,#007f7b_25px,#064a4b_29px)]" />
      <div className="flex-1 flex flex-col min-w-0">
        <div className={clsx(segoe, "flex items-start h-4 shrink-0 border-b border-[#4d7392] bg-[linear-gradient(to_right,#dcebf8_0%,#cfe4f8_35%,#b4d7fc_55%,#b4d7fc_100%)] text-[12px] tracking-[-0.2px] text-[#111]")}>
          <Icon className="w-4 h-4 -mt-1" box={16}>
            <path d="M0 0h16v16H0z" fill="#45453a" />
            <circle cx="10" cy="5" r="5" fill="#e9e84a" />
            <path d="M1 11l5-2 3 6H1z" fill="#b5b5a5" />
            <path d="M8 6l6 1-2 4z" fill="#111" />
          </Icon>
          <span className="pl-[5px] leading-[11px] whitespace-nowrap">
            Exsisten terræn1 (2).dgn [3D - V8 DGN] - Power InRoads V8i (SELECTseries 4) (Licensed For Academic Use Only)
          </span>
          <div className="w-[190px] h-1.5 mt-1 ml-[130px] bg-[#8fb2d6] opacity-50 blur-[3px]" />
        </div>
        <MenuBar />
        <MainToolbar />
        <div className="flex-1 flex min-h-0">
          <TasksPanel />
          <div className="w-1.5 shrink-0 bg-[#b3aedb]" />
          <ViewWindow />
        </div>
      </div>
      <ImportDialog />
      <Pointer />
    </div>
  );
}
